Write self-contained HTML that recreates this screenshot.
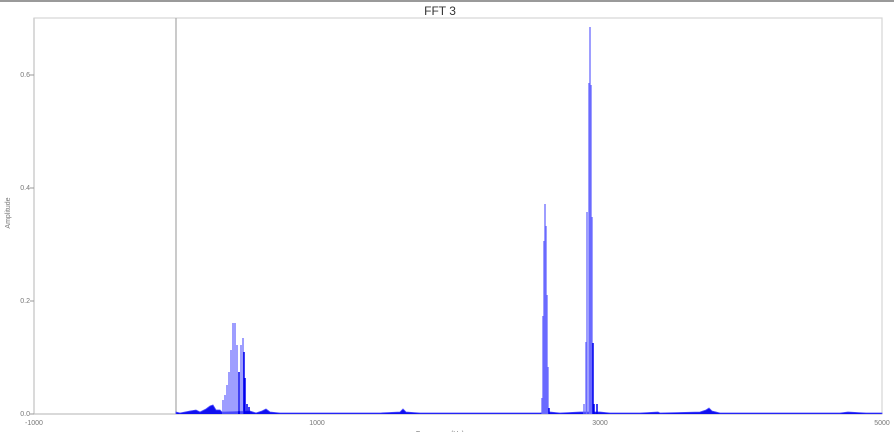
<!DOCTYPE html>
<html><head><style>
html,body{margin:0;padding:0;background:#fff;}
body{width:894px;height:432px;overflow:hidden;position:relative;font-family:"Liberation Sans",sans-serif;}
</style></head><body>
<svg width="894" height="432" xmlns="http://www.w3.org/2000/svg" style="position:absolute;left:0;top:0">
<rect x="0" y="0" width="894" height="2" fill="#9a9a9a"/>
<text x="440" y="15" font-size="12" text-anchor="middle" fill="#333" font-family="Liberation Sans">FFT 3</text>
<rect x="34" y="18" width="848" height="396" fill="none" stroke="#d6d6d6" stroke-width="1.2"/>
<line x1="34" y1="18" x2="34" y2="414" stroke="#d0d0d0" stroke-width="1.5"/>
<line x1="176" y1="18" x2="176" y2="414" stroke="#a8a8a8" stroke-width="1.2"/>
<line x1="34" y1="414" x2="882" y2="414" stroke="#bbb" stroke-width="1"/>
<g fill="#777" font-size="7" font-family="Liberation Sans">
<text x="30" y="77" text-anchor="end">0.6</text>
<text x="30" y="190" text-anchor="end">0.4</text>
<text x="30" y="303" text-anchor="end">0.2</text>
<text x="30" y="416" text-anchor="end">0.0</text>
<text x="34" y="425" text-anchor="middle">-1000</text>
<text x="317" y="425" text-anchor="middle">1000</text>
<text x="600" y="425" text-anchor="middle">3000</text>
<text x="882" y="425" text-anchor="middle">5000</text>
<text x="440" y="436" text-anchor="middle">Frequency (Hz)</text>
<text transform="translate(10,213) rotate(-90)" text-anchor="middle">Amplitude</text>
</g>
<g stroke="#999" stroke-width="1">
<line x1="30" y1="75" x2="34" y2="75"/><line x1="30" y1="188" x2="34" y2="188"/><line x1="30" y1="301" x2="34" y2="301"/><line x1="30" y1="414" x2="34" y2="414"/>
</g>
<polyline fill="#1010f0" stroke="#4a4aff" stroke-width="0.8" points="176,414 176,412 180,413 190,411 196,410 200,412 206,409 210,406 213,405 216,410 220,410 222,412 250,411 256,413 262,411 266,409 270,412 280,413 300,413 330,413 360,413 380,413 400,412 403,409 406,412 420,413 440,413 480,413 520,413 536,413 540,413 550,412 560,413 580,412 600,412 610,413 640,413 658,412 660,413 700,412 706,410 709,408 712,411 720,413 760,413 800,413 840,413 848,412 866,413 882,413 882,414"/>
<g stroke="#6a6aff" stroke-width="1.3">
<line x1="223" y1="414" x2="223" y2="400"/><line x1="225" y1="414" x2="225" y2="395"/><line x1="227" y1="414" x2="227" y2="385"/><line x1="229" y1="414" x2="229" y2="372"/><line x1="231" y1="414" x2="231" y2="350"/><line x1="233" y1="414" x2="233" y2="323"/><line x1="235" y1="414" x2="235" y2="323"/><line x1="237" y1="414" x2="237" y2="345"/>
<line x1="241" y1="414" x2="241" y2="345"/><line x1="243" y1="414" x2="243" y2="338"/>
<line x1="542" y1="414" x2="542" y2="398"/><line x1="543" y1="414" x2="543" y2="316"/><line x1="544" y1="414" x2="544" y2="241"/><line x1="545" y1="414" x2="545" y2="204"/><line x1="546" y1="414" x2="546" y2="226"/><line x1="547" y1="414" x2="547" y2="295"/><line x1="548" y1="414" x2="548" y2="367"/>
<line x1="584" y1="414" x2="584" y2="404"/><line x1="586" y1="414" x2="586" y2="342"/><line x1="587" y1="414" x2="587" y2="212"/><line x1="589" y1="414" x2="589" y2="83"/><line x1="590" y1="414" x2="590" y2="27"/><line x1="591" y1="414" x2="591" y2="85"/><line x1="592" y1="414" x2="592" y2="217"/>
</g>
<g stroke="#0000ee" stroke-width="1.5">
<line x1="239" y1="414" x2="239" y2="372"/><line x1="244" y1="414" x2="244" y2="352"/><line x1="245" y1="414" x2="245" y2="378"/><line x1="247" y1="414" x2="247" y2="404"/><line x1="249" y1="414" x2="249" y2="407"/>
<line x1="549" y1="414" x2="549" y2="408"/>
<line x1="593" y1="414" x2="593" y2="343"/><line x1="594" y1="414" x2="594" y2="404"/><line x1="597" y1="414" x2="597" y2="404"/>
</g>
</svg>
</body></html>
